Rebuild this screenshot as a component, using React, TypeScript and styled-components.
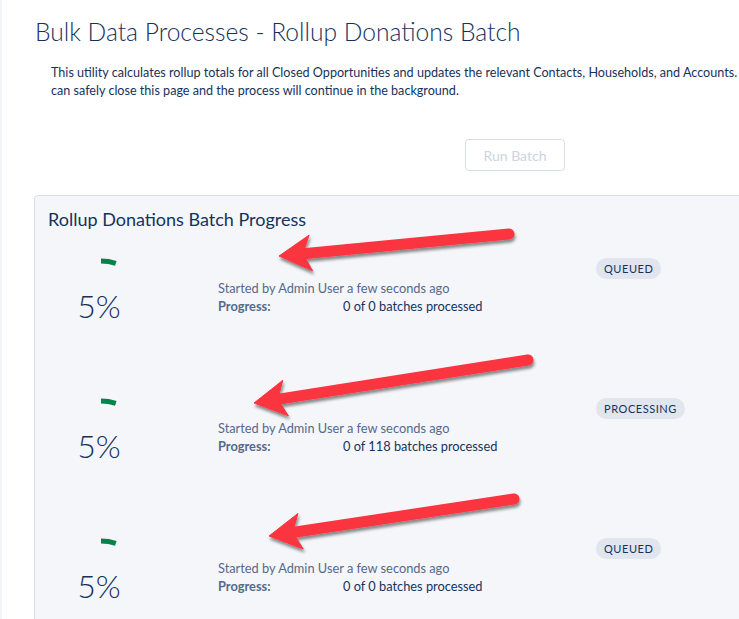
import React from "react";
import styled, { createGlobalStyle } from "styled-components";

const GlobalStyle = createGlobalStyle`
  html, body {
    margin: 0;
    padding: 0;
    background: #ffffff;
    overflow: hidden;
  }
  body {
    font-family: Lato, "Open Sans", Arial, sans-serif;
    color: #16325c;
  }
`;

type Batch = {
  percent: number;
  status: string;
  total: number;
};

const batches: Batch[] = [
  { percent: 5, status: "Queued", total: 0 },
  { percent: 5, status: "Processing", total: 118 },
  { percent: 5, status: "Queued", total: 0 },
];

type Arrow = { tail: [number, number]; tip: [number, number] };

const arrows: Arrow[] = [
  { tail: [507, 234], tip: [277, 256] },
  { tail: [526, 360], tip: [252, 403] },
  { tail: [512, 499], tip: [267, 536] },
];

export default function App() {
  return (
    <Page>
      <GlobalStyle />
      <Content>
        <Title>Bulk Data Processes - Rollup Donations Batch</Title>
        <Description>
          <span>
            This utility calculates rollup totals for all Closed Opportunities and updates the relevant
            Contacts, Households, and Accounts. You
          </span>
          <span>can safely close this page and the process will continue in the background.</span>
        </Description>
        <Actions>
          <RunButton disabled>Run Batch</RunButton>
        </Actions>
        <Panel>
          <PanelTitle>Rollup Donations Batch Progress</PanelTitle>
          {batches.map((b, i) => (
            <BatchRow key={i}>
              <Ring percent={b.percent} />
              <Details>
                <DetailLine>Started by Admin User a few seconds ago</DetailLine>
                <DetailLine>
                  <Label>Progress:</Label>
                  <Value>0 of {b.total} batches processed</Value>
                </DetailLine>
              </Details>
              <Badge>{b.status}</Badge>
            </BatchRow>
          ))}
        </Panel>
      </Content>
      <Overlay width="739" height="619" viewBox="0 0 739 619">
        <defs>
          <filter id="arrowShadow" x="-10%" y="-30%" width="120%" height="160%">
            <feDropShadow dx="1" dy="3" stdDeviation="1.8" floodColor="#000" floodOpacity="0.45" />
          </filter>
        </defs>
        {arrows.map((a, i) => (
          <ArrowShape key={i} {...a} />
        ))}
      </Overlay>
    </Page>
  );
}

function Ring({ percent }: { percent: number }) {
  const r = 48;
  const c = 2 * Math.PI * r;
  return (
    <RingBox>
      <svg width="104" height="104" viewBox="0 0 104 104">
        <circle
          cx="52"
          cy="52"
          r={r}
          fill="none"
          stroke="#04844b"
          strokeWidth="5"
          strokeDasharray={`${(c * percent) / 100} ${c}`}
          transform="rotate(-90 52 52)"
        />
      </svg>
      <RingValue>{percent}%</RingValue>
    </RingBox>
  );
}

function ArrowShape({ tail, tip }: Arrow) {
  const dx = tip[0] - tail[0];
  const dy = tip[1] - tail[1];
  const len = Math.hypot(dx, dy);
  const ux = dx / len;
  const uy = dy / len;
  const nx = -uy;
  const ny = ux;
  const headLen = 30;
  const halfW = 18;
  const bx = tip[0] - ux * headLen;
  const by = tip[1] - uy * headLen;
  const head = [
    [tip[0], tip[1]],
    [bx + nx * halfW - ux * 2, by + ny * halfW - uy * 2],
    [bx + ux * 6, by + uy * 6],
    [bx - nx * halfW - ux * 2, by - ny * halfW - uy * 2],
  ]
    .map((p) => p.join(","))
    .join(" ");
  return (
    <g filter="url(#arrowShadow)">
      <line
        x1={tail[0]}
        y1={tail[1]}
        x2={bx + ux * 8}
        y2={by + uy * 8}
        stroke="#fb3541"
        strokeWidth="11"
        strokeLinecap="round"
      />
      <polygon points={head} fill="#fb3541" strokeLinejoin="round" stroke="#fb3541" strokeWidth="1" />
    </g>
  );
}

const Page = styled.div`
  position: relative;
  width: 739px;
  height: 619px;
  overflow: hidden;
  border-left: 2px solid #f1f4f8;
  box-sizing: border-box;
`;

const Content = styled.div`
  width: 962px;
  margin-left: 32px;
  padding-top: 14px;
`;

const Title = styled.h1`
  margin: 0;
  font-size: 24.6px;
  font-weight: 300;
  line-height: 36px;
  color: #16325c;
  padding-left: 1px;
`;

const Description = styled.p`
  margin: 14px 0 0;
  padding-left: 17px;
  font-size: 12.6px;
  line-height: 18px;
  color: #16325c;
  white-space: nowrap;

  span {
    display: block;
  }
`;

const Actions = styled.div`
  display: flex;
  justify-content: center;
  margin-top: 39px;
`;

const RunButton = styled.button`
  width: 100px;
  height: 32px;
  border: 1px solid #d8dde6;
  border-radius: 4px;
  background: #ffffff;
  color: #ccd4e0;
  font-family: Lato, "Open Sans", Arial, sans-serif;
  font-size: 14px;
  padding: 0;
  cursor: default;
`;

const Panel = styled.section`
  margin-top: 24px;
  border: 1px solid #d8dde6;
  border-radius: 4px;
  background: #f4f6f9;
  padding: 10px 13px 0;
  min-height: 500px;
`;

const PanelTitle = styled.h2`
  margin: 0;
  font-size: 18px;
  font-weight: 400;
  line-height: 26px;
  color: #16325c;
`;

const BatchRow = styled.div`
  display: grid;
  grid-template-columns: 170px 380px auto;
  align-items: start;
  height: 140px;
  &:first-of-type {
    margin-top: 7px;
  }
`;

const RingBox = styled.div`
  position: relative;
  width: 104px;
  height: 104px;
  margin-top: 18px;
  margin-left: 1px;
`;

const RingValue = styled.div`
  position: absolute;
  inset: 0;
  display: flex;
  align-items: center;
  justify-content: center;
  font-size: 32px;
  font-weight: 300;
  color: #16325c;
  padding-bottom: 8px;
  padding-right: 4px;
  box-sizing: border-box;
`;

const Details = styled.div`
  display: flex;
  flex-direction: column;
  margin-top: 40px;
  font-size: 12.8px;
  line-height: 18px;
  color: #54698d;
`;

const DetailLine = styled.div`
  display: flex;
`;

const Label = styled.span`
  width: 125px;
  font-weight: 700;
`;

const Value = styled.span`
  color: #16325c;
`;

const Badge = styled.span`
  justify-self: start;
  margin-top: 19px;
  margin-left: -2px;
  height: 21px;
  padding: 0 8px;
  border-radius: 11px;
  background: #e0e5ee;
  color: #16325c;
  font-size: 11px;
  line-height: 21px;
  letter-spacing: 0.05em;
  text-transform: uppercase;
`;

const Overlay = styled.svg`
  position: absolute;
  top: 0;
  left: 0;
  pointer-events: none;
`;
